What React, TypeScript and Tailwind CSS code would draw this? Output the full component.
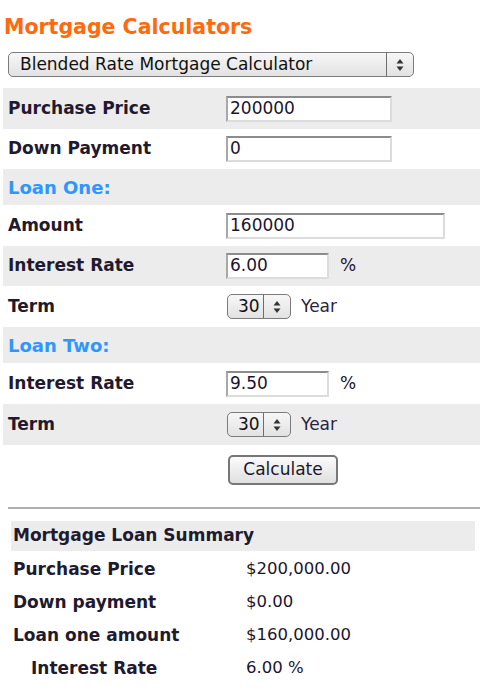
import * as React from "react";

const font = { fontFamily: '"DejaVu Sans", Verdana, sans-serif' };

function Arrows() {
  return (
    <svg width="8" height="14" viewBox="0 0 8 14" className="block">
      <path d="M4 1 L7.5 5.5 L0.5 5.5 Z" fill="#333" />
      <path d="M4 13 L7.5 8.5 L0.5 8.5 Z" fill="#333" />
    </svg>
  );
}

function FakeSelect({ value, className, textClass }: { value: string; className: string; textClass: string }) {
  return (
    <div className={`flex items-stretch rounded-[5px] border border-[#7b7b7b] bg-gradient-to-b from-[#f7f7f7] to-[#e2e2e2] ${className}`}>
      <div className={`flex flex-1 items-center text-[#111] ${textClass}`}>{value}</div>
      <div className="flex w-[27px] items-center justify-center border-l border-[#6d6d6d]">
        <Arrows />
      </div>
    </div>
  );
}

function TextBox({ value, width }: { value: string; width: string }) {
  return (
    <div className={`flex h-[26px] items-center border-2 border-t-[#8c8c8c] border-l-[#a8a8a8] border-b-[#dcdcdc] border-r-[#dcdcdc] bg-white pl-[2px] text-[17px] text-[#1c1530] ${width}`}>
      {value}
    </div>
  );
}

function Row({ label, gray, h, children }: { label: string; gray?: boolean; h: string; children?: React.ReactNode }) {
  return (
    <div className={`flex items-center ${h} ${gray ? "bg-[#ececec]" : "bg-white"}`}>
      <div className="w-[223px] pl-[5px] text-[17px] font-bold text-[#1f1a2e]">{label}</div>
      <div className="flex items-center">{children}</div>
    </div>
  );
}

function Heading({ text, h }: { text: string; h: string }) {
  return (
    <div className={`flex items-center bg-[#ececec] pl-[5px] text-[18px] font-bold text-[#2f96ff] ${h}`}>{text}</div>
  );
}

const summary = [
  { label: "Purchase Price", value: "$200,000.00", indent: false },
  { label: "Down payment", value: "$0.00", indent: false },
  { label: "Loan one amount", value: "$160,000.00", indent: false },
  { label: "Interest Rate", value: "6.00 %", indent: true },
];

export default function App() {
  return (
    <div className="h-[698px] w-[480px] overflow-hidden bg-white" style={font}>
      <div className="pl-[4px] pt-[13px] text-[20.5px] font-bold leading-[28px] text-[#ff6a0e]">Mortgage Calculators</div>

      <div className="pl-[8px] pt-[11px]">
        <FakeSelect value="Blended Rate Mortgage Calculator" className="h-[25px] w-[406px]" textClass="pl-[11px] text-[17px]" />
      </div>

      <div className="ml-[3px] mt-[11px]">
        <Row label="Purchase Price" gray h="h-[41px]">
          <TextBox value="200000" width="w-[166px]" />
        </Row>
        <Row label="Down Payment" h="h-[40px]">
          <TextBox value="0" width="w-[166px]" />
        </Row>
        <Heading text="Loan One:" h="h-[36px]" />
        <Row label="Amount" h="h-[41px]">
          <TextBox value="160000" width="w-[219px]" />
        </Row>
        <Row label="Interest Rate" gray h="h-[40px]">
          <TextBox value="6.00" width="w-[103px]" />
          <span className="ml-[11px] text-[17px] text-[#1c1530]">%</span>
        </Row>
        <Row label="Term" h="h-[41px]">
          <FakeSelect value="30" className="ml-[1px] h-[25px] w-[64px]" textClass="pl-[10px] text-[17px]" />
          <span className="ml-[10px] text-[17px] text-[#2a2340]">Year</span>
        </Row>
        <Heading text="Loan Two:" h="h-[36px]" />
        <Row label="Interest Rate" h="h-[41px]">
          <TextBox value="9.50" width="w-[103px]" />
          <span className="ml-[11px] text-[17px] text-[#1c1530]">%</span>
        </Row>
        <Row label="Term" gray h="h-[41px]">
          <FakeSelect value="30" className="ml-[1px] h-[25px] w-[64px]" textClass="pl-[10px] text-[17px]" />
          <span className="ml-[10px] text-[17px] text-[#2a2340]">Year</span>
        </Row>
        <div className="flex h-[50px] items-center pl-[225px]">
          <button className="h-[30px] w-[110px] rounded-[5px] border-2 border-[#777] bg-gradient-to-b from-[#fbfbfb] to-[#e0e0e0] text-[17px] text-[#1c1530]">
            Calculate
          </button>
        </div>
      </div>

      <div className="ml-[8px] mt-[12px] h-[2px] bg-[#b0b0b0]" />

      <div className="mx-[11px] mt-[12px] mr-[5px]">
        <div className="flex h-[30px] items-center bg-[#ececec] pl-[2px] text-[17px] font-bold text-[#1f1a2e]">
          Mortgage Loan Summary
        </div>
        <div className="pt-[2px]">
          {summary.map((r) => (
            <div key={r.label} className="flex h-[33px] items-center">
              <div className={`w-[235px] text-[17px] font-bold text-[#1f1a2e] ${r.indent ? "pl-[20px]" : "pl-[2px]"}`}>{r.label}</div>
              <div className="text-[16.5px] text-[#1c1530]">{r.value}</div>
            </div>
          ))}
        </div>
      </div>
    </div>
  );
}
